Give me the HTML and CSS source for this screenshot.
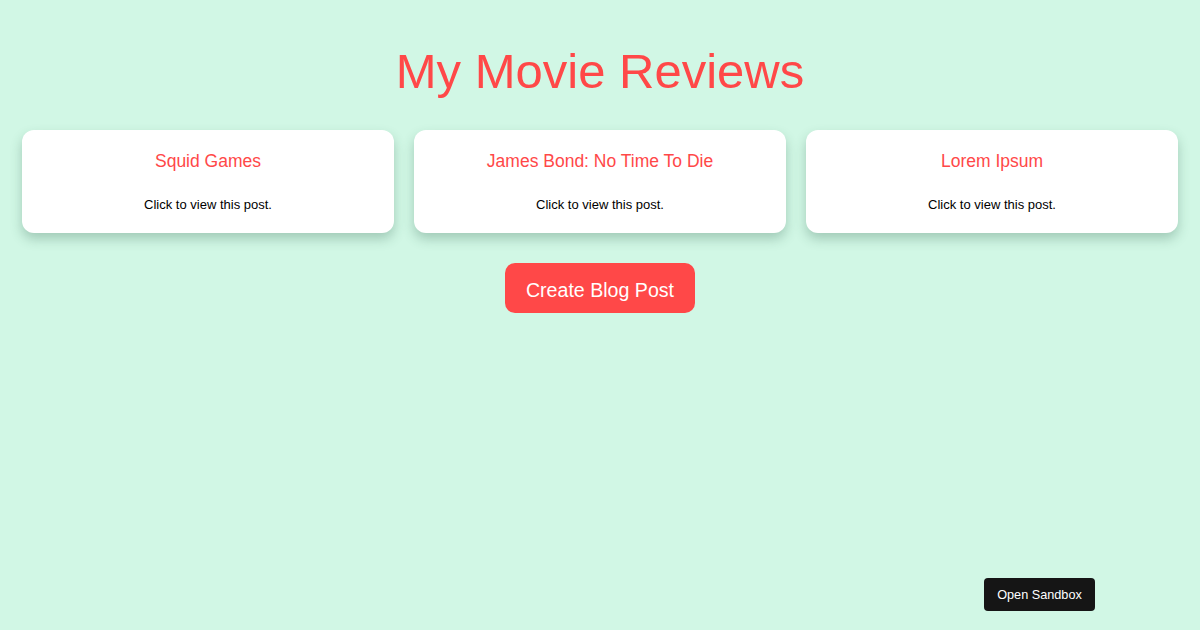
FILE: index.html
```html
<!DOCTYPE html>
<html lang="en">
<head>
<meta charset="utf-8">
<title>My Movie Reviews</title>
<link rel="stylesheet" href="styles.css">
</head>
<body>
<main class="app">
  <h1 class="title">My Movie Reviews</h1>
  <section class="cards">
    <div class="card">
      <h2 class="card-title">Squid Games</h2>
      <p class="card-text">Click to view this post.</p>
    </div>
    <div class="card">
      <h2 class="card-title">James Bond: No Time To Die</h2>
      <p class="card-text">Click to view this post.</p>
    </div>
    <div class="card">
      <h2 class="card-title">Lorem Ipsum</h2>
      <p class="card-text">Click to view this post.</p>
    </div>
  </section>
  <div class="actions">
    <button class="create-btn">Create Blog Post</button>
  </div>
</main>
<a class="sandbox-btn">Open Sandbox</a>
</body>
</html>
```
FILE: styles.css
```css
html, body {
  margin: 0;
  padding: 0;
}
body {
  background: #d1f7e5;
  font-family: "Liberation Sans", Arial, sans-serif;
  height: 630px;
}
.app {
  padding: 42px 22px 0;
}
.title {
  margin: 0;
  text-align: center;
  font-size: 49px;
  font-weight: 400;
  line-height: 58px;
  color: #ff4848;
}
.cards {
  margin-top: 30px;
  display: grid;
  grid-template-columns: repeat(3, 1fr);
  gap: 20px;
}
.card {
  background: #ffffff;
  border-radius: 12px;
  height: 103px;
  box-sizing: border-box;
  padding-top: 21px;
  text-align: center;
  box-shadow: 0 6px 12px rgba(40, 90, 70, 0.28);
}
.card-title {
  margin: 0;
  font-size: 17.5px;
  font-weight: 400;
  line-height: 21px;
  color: #ff4848;
}
.card-text {
  margin: 25px 0 0;
  font-size: 13px;
  line-height: 16px;
  color: #000000;
}
.actions {
  margin-top: 30px;
  display: flex;
  justify-content: center;
}
.create-btn {
  background: #ff4848;
  color: #ffffff;
  border: none;
  border-radius: 10px;
  height: 50px;
  width: 190px;
  box-sizing: border-box;
  padding: 5px 0 0;
  font-family: "Liberation Sans", Arial, sans-serif;
  font-size: 19.6px;
  cursor: pointer;
}
.sandbox-btn {
  position: fixed;
  right: 105px;
  bottom: 19px;
  width: 111px;
  height: 33px;
  box-sizing: border-box;
  display: flex;
  align-items: center;
  justify-content: center;
  background: #151515;
  color: #ffffff;
  border-radius: 4px;
  font-size: 12.7px;
}
```
